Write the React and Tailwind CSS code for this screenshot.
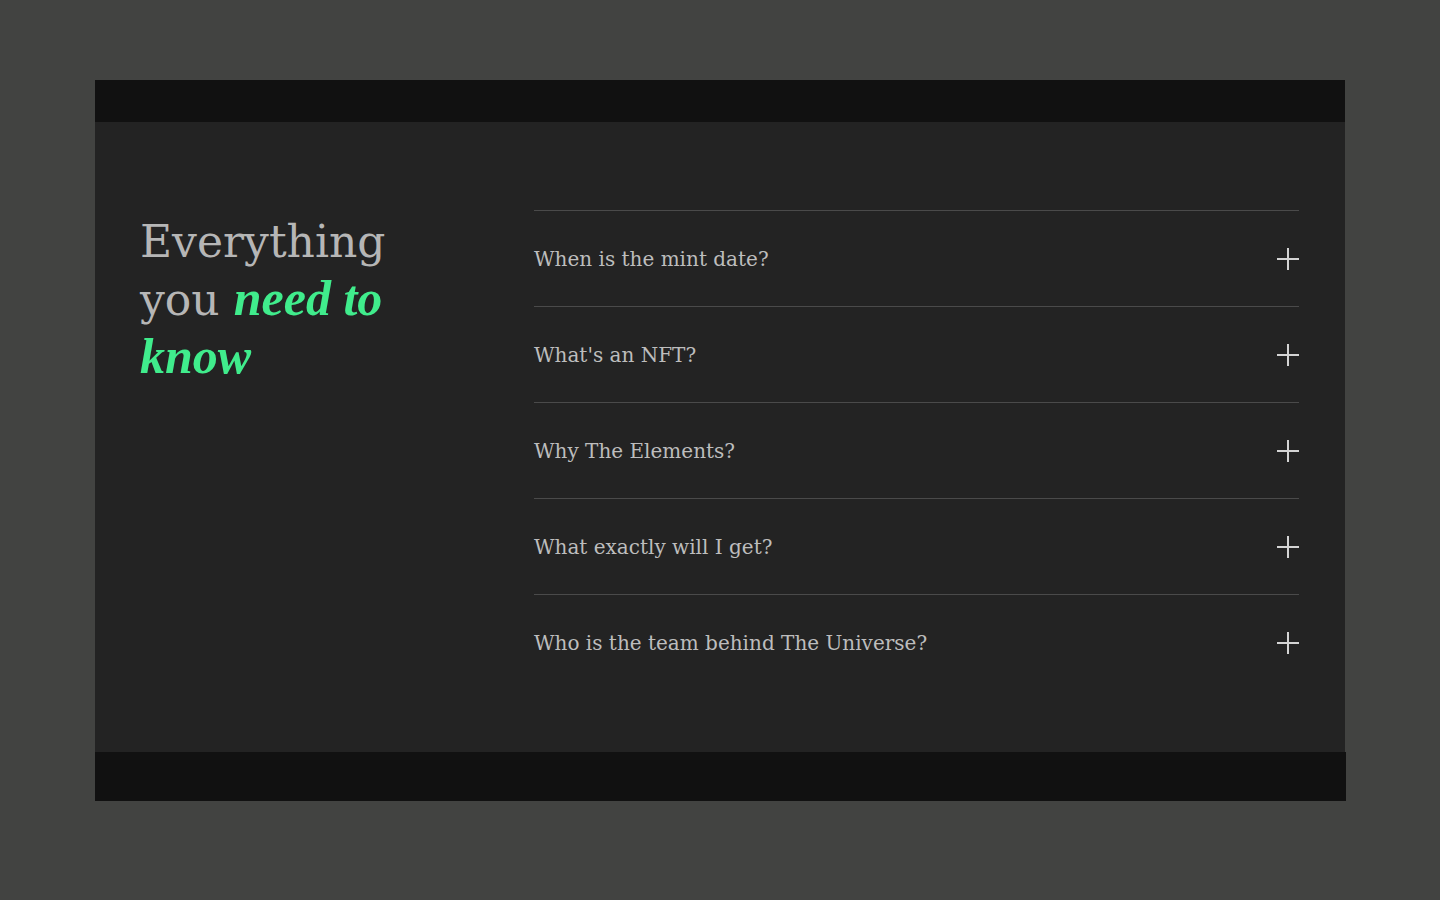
const questions = [
  'When is the mint date?',
  "What's an NFT?",
  'Why The Elements?',
  'What exactly will I get?',
  'Who is the team behind The Universe?',
]

function PlusIcon() {
  return (
    <svg width="22" height="22" viewBox="0 0 22 22" className="shrink-0 text-[#d4d4d4]">
      <path d="M11 0v22M0 11h22" stroke="currentColor" strokeWidth="2" fill="none" />
    </svg>
  )
}

function App() {
  return (
    <div className="min-h-screen bg-[#424341] pt-[80px] pl-[95px]">
      {/* top bar */}
      <div className="h-[42px] w-[1250px] bg-[#111111]" />

      {/* FAQ section */}
      <section className="flex h-[630px] w-[1250px] bg-[#232323] pl-[45px] pr-[46px] pt-[88px]">
        <div className="w-[394px] shrink-0">
          <h2 className="mt-[3px] font-['DejaVu_Serif',serif] text-[44px] leading-[57px] text-[#b6b6b6]">
            Everything
            <br />
            you{' '}
            <em className="font-['Liberation_Serif',serif] text-[50px] leading-[57px] font-bold italic text-[#40ec8c]">
              need to
            </em>
            <br />
            <em className="font-['Liberation_Serif',serif] text-[50px] leading-[57px] font-bold italic text-[#40ec8c]">
              know
            </em>
          </h2>
        </div>

        <div className="flex-1">
          {questions.map((q) => (
            <div
              key={q}
              className="flex h-[96px] items-center justify-between border-t border-[#4a4a4a]"
            >
              <span className="font-['DejaVu_Serif',serif] text-[20px] text-[#bdbdbd]">
                {q}
              </span>
              <PlusIcon />
            </div>
          ))}
        </div>
      </section>

      {/* bottom bar */}
      <div className="h-[49px] w-[1251px] bg-[#111111]" />
    </div>
  )
}

export default App
